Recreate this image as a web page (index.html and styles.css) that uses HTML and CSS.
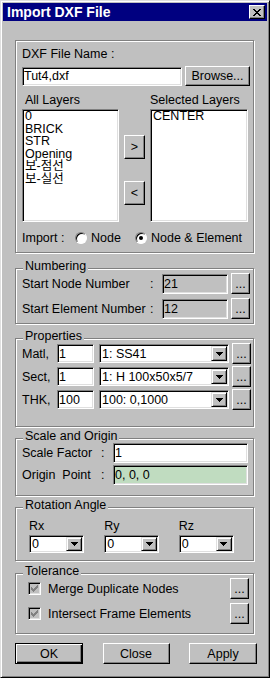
FILE: index.html
```html
<!DOCTYPE html>
<html>
  <head>
    <title>Import DXF File</title>
    <link rel="stylesheet" href="styles.css">
  </head>
  <body>
    <div class="window">
      <div class="titlebar">
        <span class="title">Import DXF File</span>
        <button type="button" class="btn close-btn">
          <svg width="8" height="7" viewBox="0 0 8 7" shape-rendering="crispEdges">
            <path d="M0 0h2v1h-2z M6 0h2v1h-2z M1 1h2v1h-2z M5 1h2v1h-2z M2 2h4v1h-4z M3 3h2v1h-2z M2 4h4v1h-4z M1 5h2v1h-2z M5 5h2v1h-2z M0 6h2v1h-2z M6 6h2v1h-2z" />
          </svg>
        </button>
      </div>

      <div class="dialog">
        <!-- File and layers -->
        <div class="group group-file">
          <div class="label">DXF File Name :</div>
          <div class="file-row">
            <input type="text" class="edit file-edit" value="Tut4,dxf" />
            <button type="button" class="btn browse-btn">Browse...</button>
          </div>
          <div class="layers">
            <div class="layers-head all-head">All Layers</div>
            <div></div>
            <div class="layers-head">Selected Layers</div>
            <ul class="listbox">
              <li>0</li>
              <li>BRICK</li>
              <li>STR</li>
              <li>Opening</li>
              <li>보-점선</li>
              <li>보-실선</li>
            </ul>
            <div class="move-btns">
              <button type="button" class="btn move-btn">&gt;</button>
              <button type="button" class="btn move-btn">&lt;</button>
            </div>
            <ul class="listbox">
              <li>CENTER</li>
            </ul>
          </div>
          <div class="import-row">
            <span class="import-label">Import :</span>
            <label class="radio-option option-node"><span class="radio"></span>Node</label>
            <label class="radio-option"><span class="radio checked"></span>Node &amp; Element</label>
          </div>
        </div>

        <!-- Numbering -->
        <div class="group group-numbering">
          <div class="group-title">Numbering</div>
          <div class="field-row">
            <span class="num-label">Start Node Number</span>
            <span class="colon">:</span>
            <input type="text" class="edit edit-disabled num-edit" value="21" readonly />
            <button type="button" class="btn dots-btn">...</button>
          </div>
          <div class="field-row">
            <span class="num-label">Start Element Number</span>
            <span class="colon">:</span>
            <input type="text" class="edit edit-disabled num-edit" value="12" readonly />
            <button type="button" class="btn dots-btn">...</button>
          </div>
        </div>

        <!-- Properties -->
        <div class="group group-props">
          <div class="group-title">Properties</div>
          <div class="field-row">
            <span class="prop-label">Matl,</span>
            <input type="text" class="edit prop-edit" value="1" />
            <div class="combo prop-combo">
              <span class="combo-text">1: SS41</span>
              <span class="combo-arrow">
                <svg width="7" height="4" viewBox="0 0 7 4" shape-rendering="crispEdges"><path d="M0 0h7v1h-7z M1 1h5v1h-5z M2 2h3v1h-3z M3 3h1v1h-1z" /></svg>
              </span>
            </div>
            <button type="button" class="btn dots-btn">...</button>
          </div>
          <div class="field-row">
            <span class="prop-label">Sect,</span>
            <input type="text" class="edit prop-edit" value="1" />
            <div class="combo prop-combo">
              <span class="combo-text">1: H 100x50x5/7</span>
              <span class="combo-arrow">
                <svg width="7" height="4" viewBox="0 0 7 4" shape-rendering="crispEdges"><path d="M0 0h7v1h-7z M1 1h5v1h-5z M2 2h3v1h-3z M3 3h1v1h-1z" /></svg>
              </span>
            </div>
            <button type="button" class="btn dots-btn">...</button>
          </div>
          <div class="field-row">
            <span class="prop-label">THK,</span>
            <input type="text" class="edit prop-edit" value="100" />
            <div class="combo prop-combo">
              <span class="combo-text">100: 0,1000</span>
              <span class="combo-arrow">
                <svg width="7" height="4" viewBox="0 0 7 4" shape-rendering="crispEdges"><path d="M0 0h7v1h-7z M1 1h5v1h-5z M2 2h3v1h-3z M3 3h1v1h-1z" /></svg>
              </span>
            </div>
            <button type="button" class="btn dots-btn">...</button>
          </div>
        </div>

        <!-- Scale and Origin -->
        <div class="group group-scale">
          <div class="group-title">Scale and Origin</div>
          <div class="field-row">
            <span class="scale-label">Scale Factor</span>
            <span class="colon">:</span>
            <input type="text" class="edit scale-edit" value="1" />
          </div>
          <div class="field-row">
            <span class="scale-label">Origin&nbsp; Point</span>
            <span class="colon">:</span>
            <input type="text" class="edit scale-edit origin-edit" value="0, 0, 0" />
          </div>
        </div>

        <!-- Rotation Angle -->
        <div class="group group-rotation">
          <div class="group-title">Rotation Angle</div>
          <div class="rot-cols">
            <div class="rot-col">
              <div>Rx</div>
              <div class="combo rot-combo">
                <span class="combo-text">0</span>
                <span class="combo-arrow">
                  <svg width="7" height="4" viewBox="0 0 7 4" shape-rendering="crispEdges"><path d="M0 0h7v1h-7z M1 1h5v1h-5z M2 2h3v1h-3z M3 3h1v1h-1z" /></svg>
                </span>
              </div>
            </div>
            <div class="rot-col">
              <div>Ry</div>
              <div class="combo rot-combo">
                <span class="combo-text">0</span>
                <span class="combo-arrow">
                  <svg width="7" height="4" viewBox="0 0 7 4" shape-rendering="crispEdges"><path d="M0 0h7v1h-7z M1 1h5v1h-5z M2 2h3v1h-3z M3 3h1v1h-1z" /></svg>
                </span>
              </div>
            </div>
            <div class="rot-col">
              <div>Rz</div>
              <div class="combo rot-combo">
                <span class="combo-text">0</span>
                <span class="combo-arrow">
                  <svg width="7" height="4" viewBox="0 0 7 4" shape-rendering="crispEdges"><path d="M0 0h7v1h-7z M1 1h5v1h-5z M2 2h3v1h-3z M3 3h1v1h-1z" /></svg>
                </span>
              </div>
            </div>
          </div>
        </div>

        <!-- Tolerance -->
        <div class="group group-tolerance">
          <div class="group-title">Tolerance</div>
          <div class="field-row check-row">
            <span class="checkbox">
              <svg width="7" height="7" viewBox="0 0 7 7" shape-rendering="crispEdges"><path d="M6 0h1v1h-1z M5 1h2v1h-2z M0 2h1v1h-1z M4 2h3v1h-3z M0 3h2v1h-2z M3 3h3v1h-3z M0 4h5v1h-5z M1 5h3v1h-3z M2 6h1v1h-1z" /></svg>
            </span>
            <span class="check-label">Merge Duplicate Nodes</span>
            <button type="button" class="btn dots-btn">...</button>
          </div>
          <div class="field-row check-row">
            <span class="checkbox">
              <svg width="7" height="7" viewBox="0 0 7 7" shape-rendering="crispEdges"><path d="M6 0h1v1h-1z M5 1h2v1h-2z M0 2h1v1h-1z M4 2h3v1h-3z M0 3h2v1h-2z M3 3h3v1h-3z M0 4h5v1h-5z M1 5h3v1h-3z M2 6h1v1h-1z" /></svg>
            </span>
            <span class="check-label">Intersect Frame Elements</span>
            <button type="button" class="btn dots-btn">...</button>
          </div>
        </div>

        <div class="actions">
          <button type="button" class="btn btn-default action-btn">OK</button>
          <button type="button" class="btn action-btn close-action">Close</button>
          <button type="button" class="btn action-btn">Apply</button>
        </div>
      </div>
    </div>
  </body>
</html>
```

FILE: styles.css
```css
:root {
  --face: #c0c0c0;
  --light: #dfdfdf;
  --hilite: #ffffff;
  --shadow: #808080;
  --dark: #000000;
  --title: #000080;
  --money: #c0dcc0;
}

* {
  box-sizing: border-box;
}

body {
  margin: 0;
  font-family: "Liberation Sans", "Noto Sans CJK KR", sans-serif;
  font-size: 12.5px;
  line-height: 14px;
  color: #000;
  background: var(--face);
}

.window {
  width: 270px;
  height: 678px;
  display: flex;
  flex-direction: column;
  padding: 2px;
  background: var(--face);
  border: 1px solid;
  border-color: var(--light) var(--dark) var(--dark) var(--light);
  box-shadow: inset 1px 1px var(--hilite), inset -1px -1px var(--shadow);
}

.titlebar {
  height: 18px;
  display: flex;
  align-items: center;
  justify-content: space-between;
  padding: 0 2px 0 4px;
  background: var(--title);
  color: #fff;
}

.title {
  font-weight: bold;
  font-size: 14px;
}

/* 3D controls */
.btn {
  margin: 0;
  padding: 0;
  font: inherit;
  color: #000;
  background: var(--face);
  border: 1px solid;
  border-color: var(--hilite) var(--dark) var(--dark) var(--hilite);
  box-shadow: inset -1px -1px var(--shadow);
}

.btn-default {
  border-color: var(--dark);
  box-shadow: inset 1px 1px var(--hilite), inset -1px -1px var(--dark),
    inset -2px -2px var(--shadow);
}

.close-btn {
  width: 16px;
  height: 14px;
  display: flex;
  align-items: center;
  justify-content: center;
}

.edit {
  margin: 0;
  padding: 0 0 0 1px;
  font: inherit;
  color: #000;
  background: #fff;
  border: 1px solid;
  border-color: var(--shadow) var(--hilite) var(--hilite) var(--shadow);
  box-shadow: inset 1px 1px var(--dark), inset -1px -1px var(--light);
  outline: none;
}

.edit-disabled {
  background: var(--face);
}

.combo {
  display: flex;
  padding: 1px;
  background: #fff;
  border: 1px solid;
  border-color: var(--shadow) var(--hilite) var(--hilite) var(--shadow);
  box-shadow: inset 1px 1px var(--dark), inset -1px -1px var(--light);
}

.combo-text {
  flex: 1;
  display: flex;
  align-items: center;
  padding-left: 1px;
}

.combo-arrow {
  width: 16px;
  display: flex;
  align-items: center;
  justify-content: center;
  background: var(--face);
  border: 1px solid;
  border-color: var(--light) var(--dark) var(--dark) var(--light);
  box-shadow: inset 1px 1px var(--hilite), inset -1px -1px var(--shadow);
}

.dots-btn {
  width: 19px;
  height: 21px;
  margin-left: 3px;
}

/* Dialog body */
.dialog {
  padding: 19px 13px 0 12px;
}

.group {
  padding-left: 6px;
  border: 1px solid var(--shadow);
  box-shadow: inset 1px 1px var(--hilite), 1px 1px var(--hilite);
}

.group-title {
  width: max-content;
  margin: -10px 0 0 1px;
  padding: 0 2px;
  background: var(--face);
}

.field-row {
  display: flex;
  align-items: center;
  height: 21px;
}

.colon {
  width: 12px;
}

/* File + layers */
.group-file {
  height: 213px;
  padding-top: 6px;
}

.file-row {
  display: flex;
  align-items: center;
  margin-top: 5px;
}

.file-edit {
  width: 160px;
  height: 19px;
}

.browse-btn {
  width: 65px;
  height: 20px;
  margin-left: 3px;
}

.layers {
  display: grid;
  grid-template-columns: 97px 21px 98px;
  column-gap: 5px;
  row-gap: 2px;
  margin-top: 7px;
}

.all-head {
  padding-left: 3px;
}

.listbox {
  height: 113px;
  margin: 0;
  padding: 0 0 0 2px;
  list-style: none;
  background: #fff;
  border: 1px solid;
  border-color: var(--shadow) var(--hilite) var(--hilite) var(--shadow);
  box-shadow: inset 1px 1px var(--dark), inset -1px -1px var(--light);
}

.listbox li {
  line-height: 12.5px;
}

.move-btns {
  display: flex;
  flex-direction: column;
  gap: 22px;
  padding-top: 26px;
}

.move-btn {
  height: 24px;
}

.import-row {
  display: flex;
  align-items: center;
  margin-top: 9px;
}

.import-label {
  width: 53px;
}

.radio-option {
  display: flex;
  align-items: center;
  gap: 4px;
}

.option-node {
  width: 60px;
}

.radio {
  width: 12px;
  height: 12px;
  display: flex;
  align-items: center;
  justify-content: center;
  border-radius: 50%;
  background: #fff;
  border: 1px solid;
  border-color: var(--shadow) var(--hilite) var(--hilite) var(--shadow);
  box-shadow: inset 1px 1px var(--dark);
}

.radio.checked::after {
  content: "";
  width: 4px;
  height: 4px;
  border-radius: 50%;
  background: #000;
}

/* Numbering */
.group-numbering {
  height: 56px;
  margin-top: 15px;
}

.group-numbering .field-row + .field-row {
  margin-top: 4px;
}

.num-label {
  width: 128px;
}

.num-edit {
  width: 66px;
  height: 20px;
}

/* Properties */
.group-props {
  height: 89px;
  margin-top: 14px;
}

.group-props .field-row:first-of-type {
  margin-top: 9px;
}

.group-props .field-row + .field-row {
  margin-top: 2px;
}

.prop-label {
  width: 35px;
}

.prop-edit {
  width: 37px;
  height: 19px;
}

.prop-combo {
  width: 130px;
  height: 19px;
  margin-left: 5px;
}

/* Scale and Origin */
.group-scale {
  height: 58px;
  margin-top: 11px;
}

.group-scale .field-row {
  height: 20px;
}

.group-scale .field-row:first-of-type {
  margin-top: 4px;
}

.group-scale .field-row + .field-row {
  margin-top: 2px;
}

.scale-label {
  width: 79px;
}

.scale-edit {
  width: 135px;
  height: 20px;
}

.origin-edit {
  background: var(--money);
}

/* Rotation */
.group-rotation {
  height: 54px;
  margin-top: 11px;
}

.rot-cols {
  display: flex;
  margin-top: 7px;
  padding-left: 7px;
}

.rot-col {
  width: 79px;
}

.rot-col + .rot-col {
  width: 78px;
}

.rot-combo {
  width: 55px;
  height: 18px;
  margin-top: 2px;
}

/* Tolerance */
.group-tolerance {
  height: 61px;
  margin-top: 12px;
}

.check-row {
  padding: 0 4px 0 6px;
}

.check-row:first-of-type {
  margin-top: 4px;
}

.check-row + .check-row {
  margin-top: 4px;
}

.checkbox {
  width: 13px;
  height: 13px;
  display: flex;
  align-items: center;
  justify-content: center;
  background: var(--face);
  border: 1px solid;
  border-color: var(--shadow) var(--hilite) var(--hilite) var(--shadow);
  box-shadow: inset 1px 1px var(--dark), inset -1px -1px var(--light);
}

.checkbox svg {
  fill: var(--shadow);
}

.check-label {
  margin-left: 7px;
}

.check-row .dots-btn {
  margin-left: auto;
}

/* Bottom buttons */
.actions {
  display: flex;
  justify-content: space-between;
  margin: 9px -3px 0 0;
}

.action-btn {
  width: 68px;
  height: 21px;
}

.close-action {
  width: 67px;
}
```
